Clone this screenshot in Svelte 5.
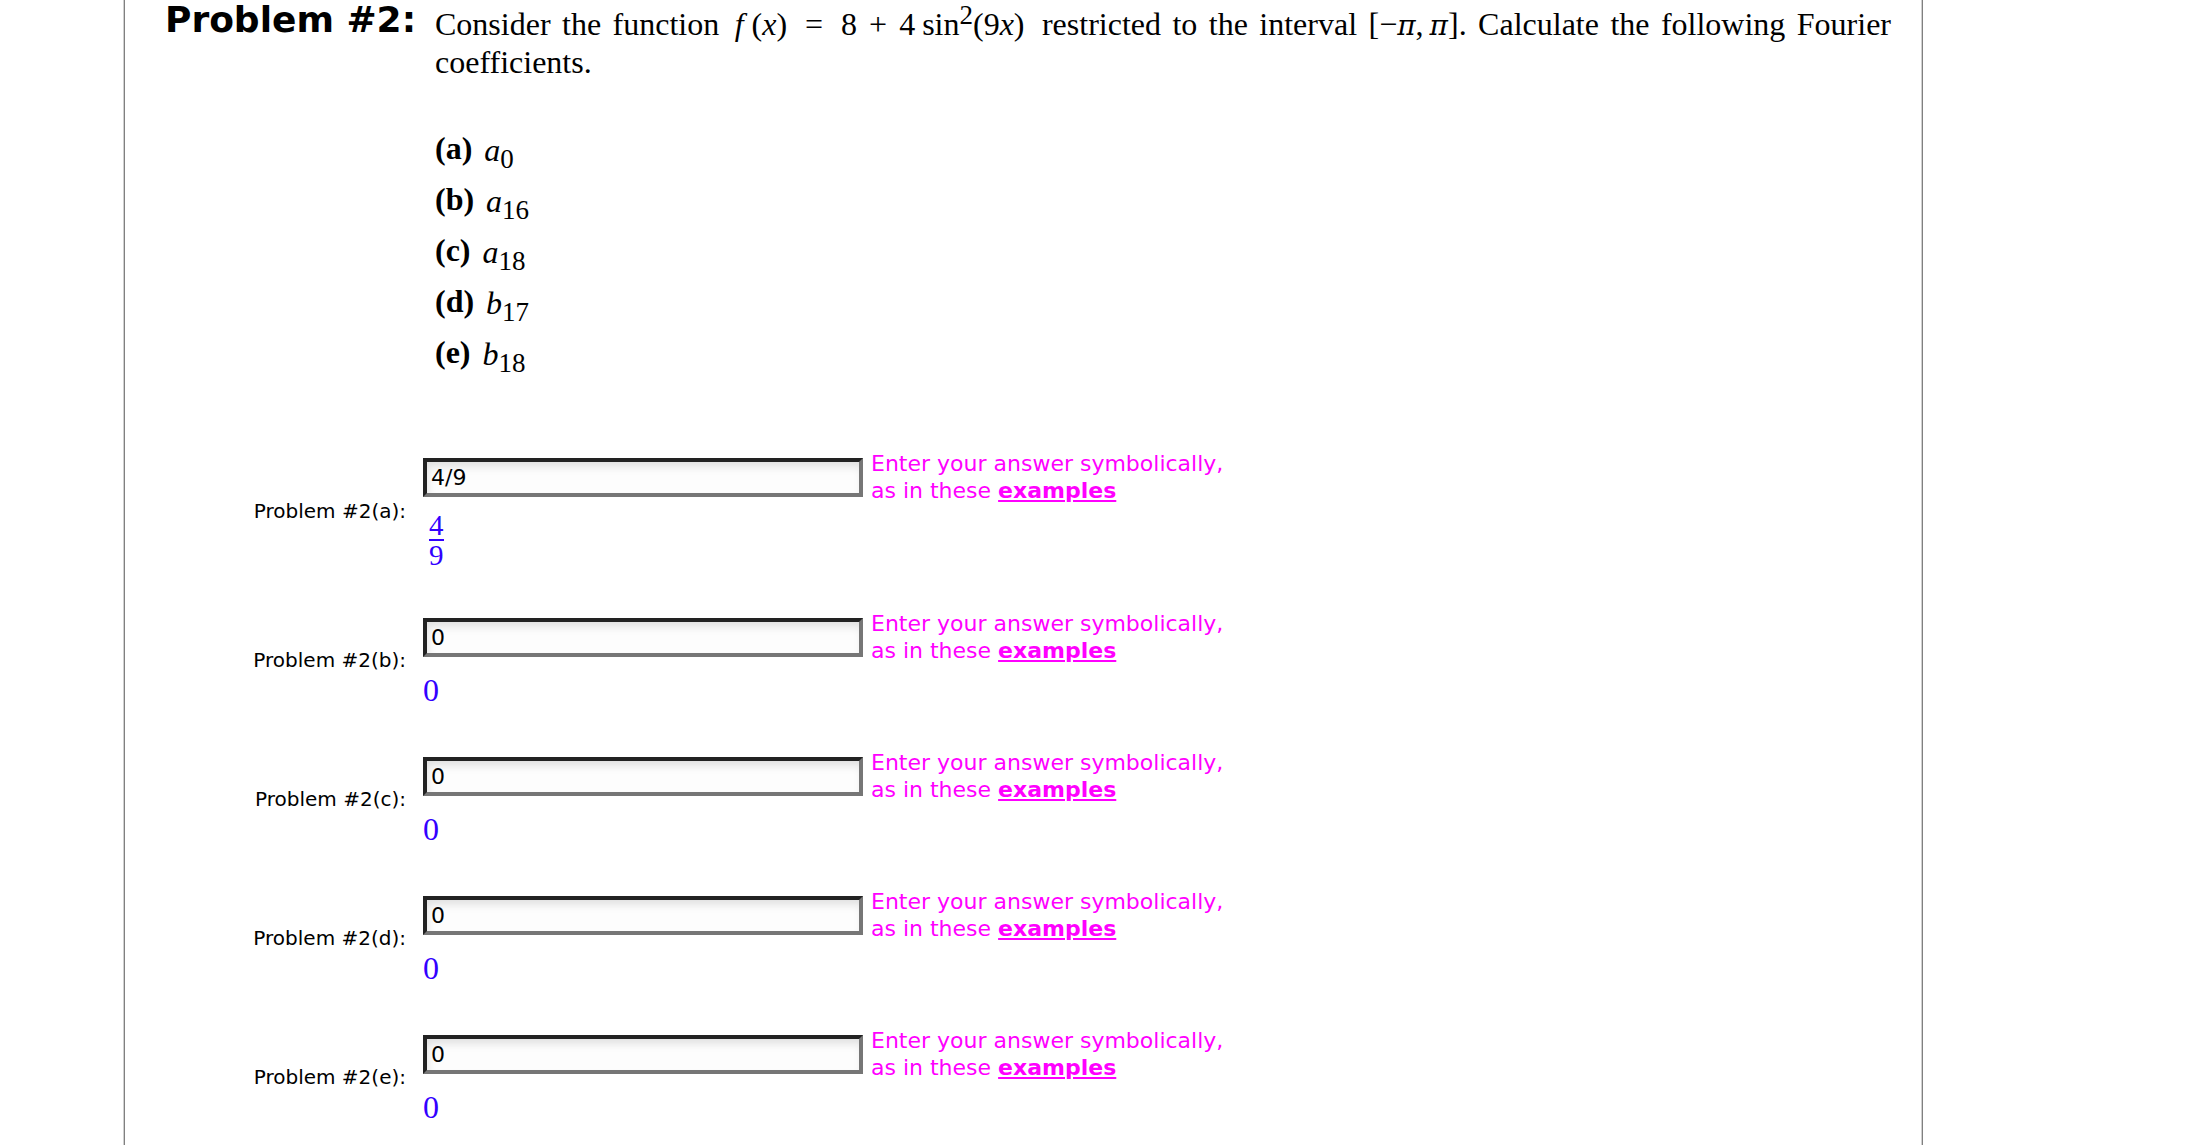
<script>
  const coefficients = [
    { part: 'a', name: 'a', index: '0' },
    { part: 'b', name: 'a', index: '16' },
    { part: 'c', name: 'a', index: '18' },
    { part: 'd', name: 'b', index: '17' },
    { part: 'e', name: 'b', index: '18' }
  ];

  let answers = $state([
    { part: 'a', value: '4/9' },
    { part: 'b', value: '0' },
    { part: 'c', value: '0' },
    { part: 'd', value: '0' },
    { part: 'e', value: '0' }
  ]);
</script>

<main class="sheet">
  <section class="problem">
    <h1>Problem #2:</h1>
    <div class="statement">
      <p>
        Consider the function
        <span class="math formula"><i class="fn">f</i>(<i>x</i>)<span class="rel">=</span>8<span class="op">+</span>4<span class="sin">sin</span><sup>2</sup>(9<i>x</i>)</span>
        restricted to the interval
        <span class="math">[−<i class="pi">π</i>,<i class="pi second">π</i>].</span>
        Calculate the following Fourier coefficients.
      </p>
      <ul>
        {#each coefficients as c}
          <li><b>({c.part})</b><span class="coef"><i>{c.name}</i><sub>{c.index}</sub></span></li>
        {/each}
      </ul>
    </div>
  </section>

  <form class="answers">
    {#each answers as answer}
      <div class="row">
        <label for="answer-{answer.part}">Problem #2({answer.part}):</label>
        <div class="field">
          <div class="entry">
            <input id="answer-{answer.part}" type="text" bind:value={answer.value} />
            <p class="hint">Enter your answer symbolically,<br />as in these <a href="#examples">examples</a></p>
          </div>
          {#if answer.value.includes('/')}
            <div class="fraction">
              <span>{answer.value.split('/')[0]}</span>
              <span class="denominator">{answer.value.split('/')[1]}</span>
            </div>
          {:else}
            <div class="result">{answer.value}</div>
          {/if}
        </div>
      </div>
    {/each}
  </form>
</main>

<style>
  :global(body) {
    margin: 0;
    background: #fff;
    overflow: hidden;
  }

  .sheet {
    min-height: 100vh;
    box-sizing: border-box;
    margin: 0 268px 0 124px;
    border-left: 1px solid #808080;
    border-right: 1px solid #808080;
    box-shadow: -1px 0 #d0d0d0, inset -1px 0 #d0d0d0;
    color: #000;
    font-family: Verdana, 'DejaVu Sans', sans-serif;
  }

  .problem {
    display: flex;
    align-items: flex-start;
    padding: 0 31px 0 40px;
  }

  h1 {
    flex: none;
    width: 270px;
    margin: 0;
    font-size: 36px;
    line-height: 40px;
    white-space: nowrap;
  }

  .statement {
    flex: 1;
    padding-top: 5px;
    font-family: 'Liberation Serif', 'Times New Roman', serif;
    font-size: 32px;
    line-height: 38px;
  }

  .statement p {
    margin: 0;
    text-align: justify;
  }

  .math {
    white-space: nowrap;
  }

  .formula {
    margin-right: 6px;
  }

  .fn {
    margin: 0 8px 0 4px;
  }

  .rel {
    margin: 0 18px;
  }

  .op {
    margin: 0 12px;
  }

  .sin {
    margin-left: 7px;
  }

  sup,
  sub {
    font-size: 27px;
    line-height: 0;
  }

  sup {
    vertical-align: 11px;
  }

  sub {
    vertical-align: -7px;
  }

  .pi {
    font-family: 'DejaVu Serif', serif;
    font-size: 28px;
    line-height: 0;
  }

  .second {
    margin-left: 6px;
  }

  ul {
    margin: 42px 0 0;
    padding: 0;
    list-style: none;
  }

  li {
    line-height: 51px;
  }

  .coef {
    margin-left: 12px;
    line-height: 0;
    vertical-align: -2px;
  }

  .answers {
    display: flex;
    flex-direction: column;
    gap: 39px;
    padding-top: 72px;
  }

  .row {
    display: grid;
    grid-template-columns: 281px 1fr;
    column-gap: 17px;
    align-items: center;
  }

  label {
    font-size: 20px;
    text-align: right;
  }

  .entry {
    display: flex;
    align-items: center;
    gap: 8px;
  }

  input {
    box-sizing: border-box;
    width: 440px;
    height: 39px;
    padding: 0 4px;
    border: 4px solid;
    border-color: #222 #767676 #767676 #222;
    background: #fdfdfd;
    box-shadow: inset 2px 6px 10px -2px #ddd;
    color: #000;
    font: inherit;
    font-size: 22px;
  }

  .hint {
    margin: 0;
    color: #f0f;
    font-size: 22px;
    line-height: 27px;
  }

  .hint a {
    color: #f0f;
    font-weight: bold;
  }

  .result,
  .fraction {
    color: #30f;
    font-family: 'Liberation Serif', 'Times New Roman', serif;
  }

  .result {
    padding: 9px 0 3px;
    font-size: 32px;
    line-height: 34px;
  }

  .fraction {
    display: inline-flex;
    flex-direction: column;
    margin: 9px 0 4px 6px;
    font-size: 29px;
    line-height: 24px;
    text-align: center;
  }

  .denominator {
    margin-top: 2px;
    padding-top: 2px;
    border-top: 2px solid;
  }
</style>
